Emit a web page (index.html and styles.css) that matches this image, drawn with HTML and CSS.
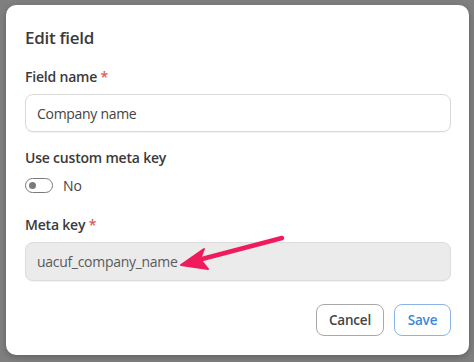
FILE: index.html
```html
<!DOCTYPE html>
<html>
<head>
<meta charset="utf-8">
<link rel="stylesheet" href="styles.css">
</head>
<body>
<div class="backdrop">
  <div class="dialog">
    <h2 class="title">Edit field</h2>
    <div class="field">
      <label class="label">Field name <span class="req">*</span></label>
      <div class="input">Company name</div>
    </div>
    <div class="field">
      <label class="label">Use custom meta key</label>
      <div class="toggle-row">
        <span class="toggle"><span class="knob"></span></span>
        <span class="toggle-text">No</span>
      </div>
    </div>
    <div class="field">
      <label class="label">Meta key <span class="req">*</span></label>
      <div class="input disabled">uacuf_company_name</div>
    </div>
    <div class="actions">
      <button class="btn">Cancel</button>
      <button class="btn primary">Save</button>
    </div>
    <svg class="arrow" width="474" height="362" viewBox="0 0 474 362">
      <path d="M282 238 L202 259" stroke="#f01a5c" stroke-width="4.5" stroke-linecap="round" fill="none"/>
      <path d="M181 265 L204 249 L200 259 L208 269 Z" fill="#f01a5c" stroke="#f01a5c" stroke-width="2" stroke-linejoin="round"/>
    </svg>
  </div>
</div>
</body>
</html>
```
FILE: styles.css
```css
* { box-sizing: border-box; }
html, body { margin: 0; padding: 0; }
body {
  width: 474px;
  height: 362px;
  overflow: hidden;
  background: #7f7f7f;
  font-family: "Open Sans", "Noto Sans", sans-serif;
}
.backdrop {
  width: 474px;
  height: 362px;
  padding: 5px 5px 0 6px;
}
.dialog {
  position: relative;
  width: 463px;
  height: 350px;
  background: #fff;
  border-radius: 10px;
  padding: 22px 18px 0 19px;
  box-shadow: 0 2px 6px rgba(0,0,0,0.25);
}
.title {
  margin: 0 0 18px;
  font-size: 17px;
  line-height: 22px;
  font-weight: 600;
  color: #3a3a3a;
  letter-spacing: -0.3px;
}
.field { display: flex; flex-direction: column; }
.label {
  font-size: 14px;
  line-height: 20px;
  font-weight: 600;
  color: #3a3a3a;
  letter-spacing: -0.2px;
  margin-bottom: 7px;
}
.req { color: #e05a5a; }
.input {
  height: 38px;
  border: 1px solid #d9d9d9;
  border-radius: 8px;
  padding: 0 11px;
  display: flex;
  align-items: center;
  font-size: 14px;
  color: #444;
  letter-spacing: -0.3px;
  box-shadow: 0 1px 1px rgba(0,0,0,0.05);
  margin-bottom: 16px;
}
.input.disabled {
  height: 39px;
  background: #ebebeb;
  color: #5a5a5a;
  border-color: #dcdcdc;
  margin-bottom: 23px;
}
.toggle-row {
  display: flex;
  align-items: center;
  gap: 10px;
  height: 18px;
  margin-top: 1px;
  margin-bottom: 21px;
}
.toggle {
  width: 28px;
  height: 15px;
  border: 1.5px solid #7a7a7a;
  border-radius: 8px;
  display: flex;
  align-items: center;
  padding-left: 3px;
}
.knob {
  width: 7px;
  height: 7px;
  border-radius: 50%;
  background: #7a7a7a;
}
.toggle-text {
  font-size: 14px;
  color: #444;
}
.actions {
  display: flex;
  justify-content: flex-end;
  gap: 10px;
}
.btn {
  height: 32px;
  padding: 0 12px;
  border: 1px solid #a9a9a9;
  border-radius: 8px;
  background: #fff;
  font-family: inherit;
  font-size: 13.5px;
  font-weight: 600;
  color: #444;
  letter-spacing: -0.2px;
}
.btn:first-child { width: 68px; }
.btn.primary {
  width: 57px;
  border-color: #8ab4e6;
  color: #3b87d8;
}
.arrow {
  position: absolute;
  left: -6px;
  top: -5px;
  pointer-events: none;
}
```
